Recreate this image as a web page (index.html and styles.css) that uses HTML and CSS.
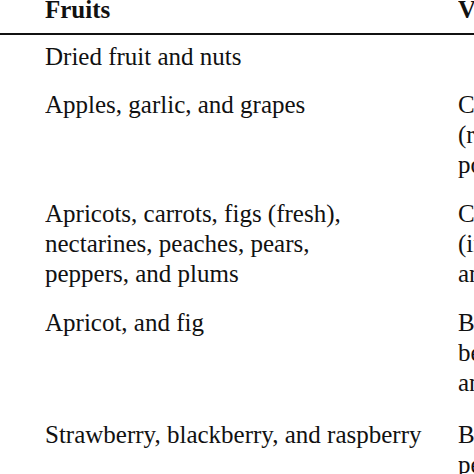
FILE: index.html
```html
<!DOCTYPE html>
<html>
<head>
<meta charset="utf-8">
<link rel="stylesheet" href="styles.css">
</head>
<body>
<div class="table">
  <div class="row head">
    <div class="cell">Fruits</div>
    <div class="cell">Vegetables</div>
  </div>
  <div class="row r1">
    <div class="cell">Dried fruit and nuts</div>
    <div class="cell"></div>
  </div>
  <div class="row r2">
    <div class="cell">Apples, garlic, and grapes</div>
    <div class="cell">Cabbage, onions<br>(raw), leeks and<br>potatoes</div>
  </div>
  <div class="row r3">
    <div class="cell">Apricots, carrots, figs (fresh),<br>nectarines, peaches, pears,<br>peppers, and plums</div>
    <div class="cell">Cauliflower<br>(including broccoli)<br>and tomatoes</div>
  </div>
  <div class="row r4">
    <div class="cell">Apricot, and fig</div>
    <div class="cell">Beans, cucumber,<br>beets, lettuce<br>and spinach</div>
  </div>
  <div class="row r5">
    <div class="cell">Strawberry, blackberry, and raspberry</div>
    <div class="cell">Brussels sprouts,<br>peas</div>
  </div>
</div>
</body>
</html>
```

FILE: styles.css
```css
html, body {
  margin: 0;
  padding: 0;
  background: #ffffff;
  overflow: hidden;
}
body {
  width: 474px;
  height: 474px;
  font-family: "Liberation Serif", "Times New Roman", serif;
  font-size: 25px;
  line-height: 30px;
  color: #111111;
}
.table {
  margin-top: -5px;
}
.row {
  display: grid;
  grid-template-columns: 413px 200px;
  padding-left: 45px;
}
.cell {
  white-space: nowrap;
  overflow: hidden;
}
.head {
  font-weight: bold;
  padding-bottom: 8px;
  border-bottom: 2px solid #111111;
}
.r1 { padding-top: 7px; }
.r2 { padding-top: 18px; }
.r3 { padding-top: 19px; }
.r4 { padding-top: 19px; }
.r5 { padding-top: 22px; }
```
